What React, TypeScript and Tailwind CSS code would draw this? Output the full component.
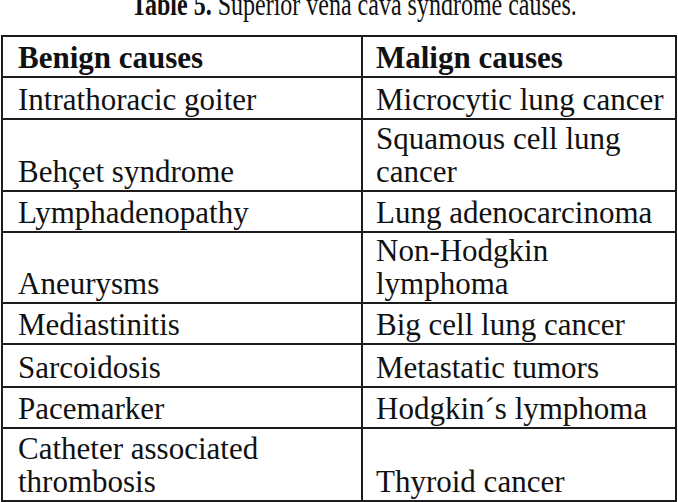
const rows: { benign: string; malign: string; h: string }[] = [
  { benign: 'Intrathoracic goiter', malign: 'Microcytic lung cancer', h: 'h-[42px]' },
  { benign: 'Behçet syndrome', malign: 'Squamous cell lung cancer', h: 'h-[72px]' },
  { benign: 'Lymphadenopathy', malign: 'Lung adenocarcinoma', h: 'h-[41px]' },
  { benign: 'Aneurysms', malign: 'Non-Hodgkin lymphoma', h: 'h-[71px]' },
  { benign: 'Mediastinitis', malign: 'Big cell lung cancer', h: 'h-[41px]' },
  { benign: 'Sarcoidosis', malign: 'Metastatic tumors', h: 'h-[43px]' },
  { benign: 'Pacemarker', malign: 'Hodgkin´s lymphoma', h: 'h-[41px]' },
  { benign: 'Catheter associated thrombosis', malign: 'Thyroid cancer', h: 'h-[71px]' },
];

function Cell({ text, left, bold }: { text: string; left?: boolean; bold?: boolean }) {
  return (
    <div
      className={`flex items-end pb-[2px] ${left ? 'pl-[15px] pr-[8px] border-r-2 border-[#1c1c1c]' : 'pl-[13px] pr-[4px]'} ${bold ? 'font-bold' : ''}`}
    >
      <span className="leading-[33px]">{text}</span>
    </div>
  );
}

export default function App() {
  return (
    <div className="w-[678px] h-[502px] overflow-hidden bg-white text-[#111] font-['Liberation_Serif','Times_New_Roman',serif] text-[31px]">
      {/* title is cropped at the top of the shot */}
      <div className="flex flex-col h-[35px]">
        <div className="-mt-[4px] h-[24px] text-center pl-[30px] text-[24px] leading-[24px] origin-bottom scale-y-[1.3]">
          <span className="font-bold">Table 5.</span> Superior vena cava syndrome causes.
        </div>
      </div>

      <div className="ml-[1px] w-[676px] border-2 border-[#1c1c1c]">
        <div className="grid grid-cols-[360px_1fr] h-[41px] border-b-2 border-[#1c1c1c]">
          <Cell text="Benign causes" left bold />
          <Cell text="Malign causes" bold />
        </div>
        {rows.map((r, i) => (
          <div
            key={r.benign}
            className={`grid grid-cols-[360px_1fr] ${r.h} ${i < rows.length - 1 ? 'border-b-2 border-[#1c1c1c]' : ''}`}
          >
            <Cell text={r.benign} left />
            <Cell text={r.malign} />
          </div>
        ))}
      </div>
      <div className="h-[2px] bg-[#bdbdbd]" />
    </div>
  );
}
